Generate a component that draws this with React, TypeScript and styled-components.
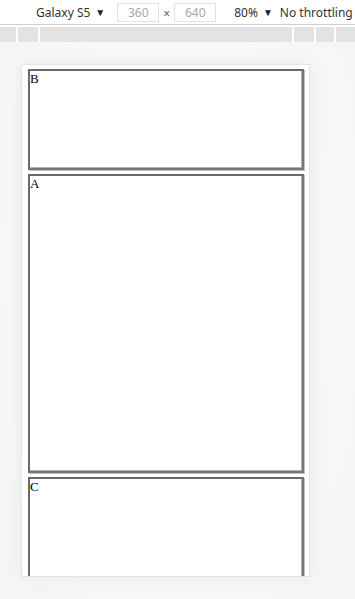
import React from "react";
import styled, { createGlobalStyle } from "styled-components";

const Global = createGlobalStyle`
  html, body { margin: 0; padding: 0; }
  body {
    width: 355px;
    height: 599px;
    overflow: hidden;
    background: #f7f7f7;
    font-family: "Noto Sans", "Open Sans", sans-serif;
  }
`;

const Page = styled.div`
  width: 355px;
  height: 599px;
  display: flex;
  flex-direction: column;
  overflow: hidden;
`;

const Toolbar = styled.div`
  height: 24px;
  flex: none;
  background: #ffffff;
  border-bottom: 1px solid #cfcfcf;
  display: flex;
  align-items: center;
  padding-left: 36px;
  font-size: 12px;
  color: #333;
  white-space: nowrap;
  overflow: hidden;
`;

const Menu = styled.span<{ $left: number }>`
  flex: none;
  display: inline-flex;
  align-items: center;
  gap: 5px;
  margin-left: ${(p) => p.$left}px;
`;

const Caret = styled.span`
  font-size: 10px;
  color: #222;
`;

const SizeInput = styled.span<{ $left: number }>`
  flex: none;
  box-sizing: border-box;
  width: 42px;
  height: 19px;
  margin-left: ${(p) => p.$left}px;
  border: 1px solid #e2e2e2;
  color: #a8a8a8;
  display: inline-flex;
  align-items: center;
  justify-content: center;
  font-size: 12px;
`;

const Times = styled.span`
  flex: none;
  width: 15px;
  text-align: center;
  color: #666;
  font-size: 12px;
  margin-top: 3px;
`;

const RulerGap = styled.div`
  height: 2px;
  flex: none;
  background: #ffffff;
`;

const Ruler = styled.div`
  height: 15px;
  flex: none;
  display: flex;
  gap: 2px;
  background: #ffffff;
`;

const RulerSeg = styled.div<{ $w?: number }>`
  background: #e3e3e3;
  ${(p) => (p.$w ? `width: ${p.$w}px; flex: none;` : `flex: 1;`)}
`;

const Stage = styled.div`
  flex: 1;
  padding: 22px 0 0 21px;
  background: radial-gradient(ellipse at 50% 40%, #fbfbfb 0%, #f5f5f5 100%);
`;

const Device = styled.div`
  box-sizing: border-box;
  width: 289px;
  height: 513px;
  background: #ffffff;
  border: 1px solid #e4e4e4;
  box-shadow: 0 0 18px rgba(0, 0, 0, 0.06);
  padding: 4px 5px 0 6px;
  display: flex;
  flex-direction: column;
  gap: 4px;
  overflow: hidden;
`;

const Pane = styled.div<{ $h: number }>`
  box-sizing: border-box;
  height: ${(p) => p.$h}px;
  flex: none;
  border: 2px solid #6a6a6a;
  border-right-color: #767676;
  border-bottom-color: #767676;
  box-shadow: inset -1px -1px 0 #b0b0b0, 1px 1px 0 #c4c4c4;
  font-family: "Liberation Serif", "DejaVu Serif", serif;
  font-size: 13px;
  line-height: 14px;
  color: #000;
  padding: 1px 0 0 0;
`;

export default function App() {
  return (
    <>
      <Global />
      <Page>
        <Toolbar>
          <Menu $left={0}>
            Galaxy S5 <Caret>▼</Caret>
          </Menu>
          <SizeInput $left={12}>360</SizeInput>
          <Times>×</Times>
          <SizeInput $left={0}>640</SizeInput>
          <Menu $left={18}>
            80% <Caret>▼</Caret>
          </Menu>
          <Menu $left={7}>
            No throttling <Caret>▼</Caret>
          </Menu>
        </Toolbar>
        <RulerGap />
        <Ruler>
          <RulerSeg $w={16} />
          <RulerSeg $w={20} />
          <RulerSeg />
          <RulerSeg $w={20} />
          <RulerSeg $w={18} />
          <RulerSeg $w={19} />
        </Ruler>
        <Stage>
          <Device>
            <Pane $h={101}>B</Pane>
            <Pane $h={299}>A</Pane>
            <Pane $h={200}>C</Pane>
          </Device>
        </Stage>
      </Page>
    </>
  );
}
